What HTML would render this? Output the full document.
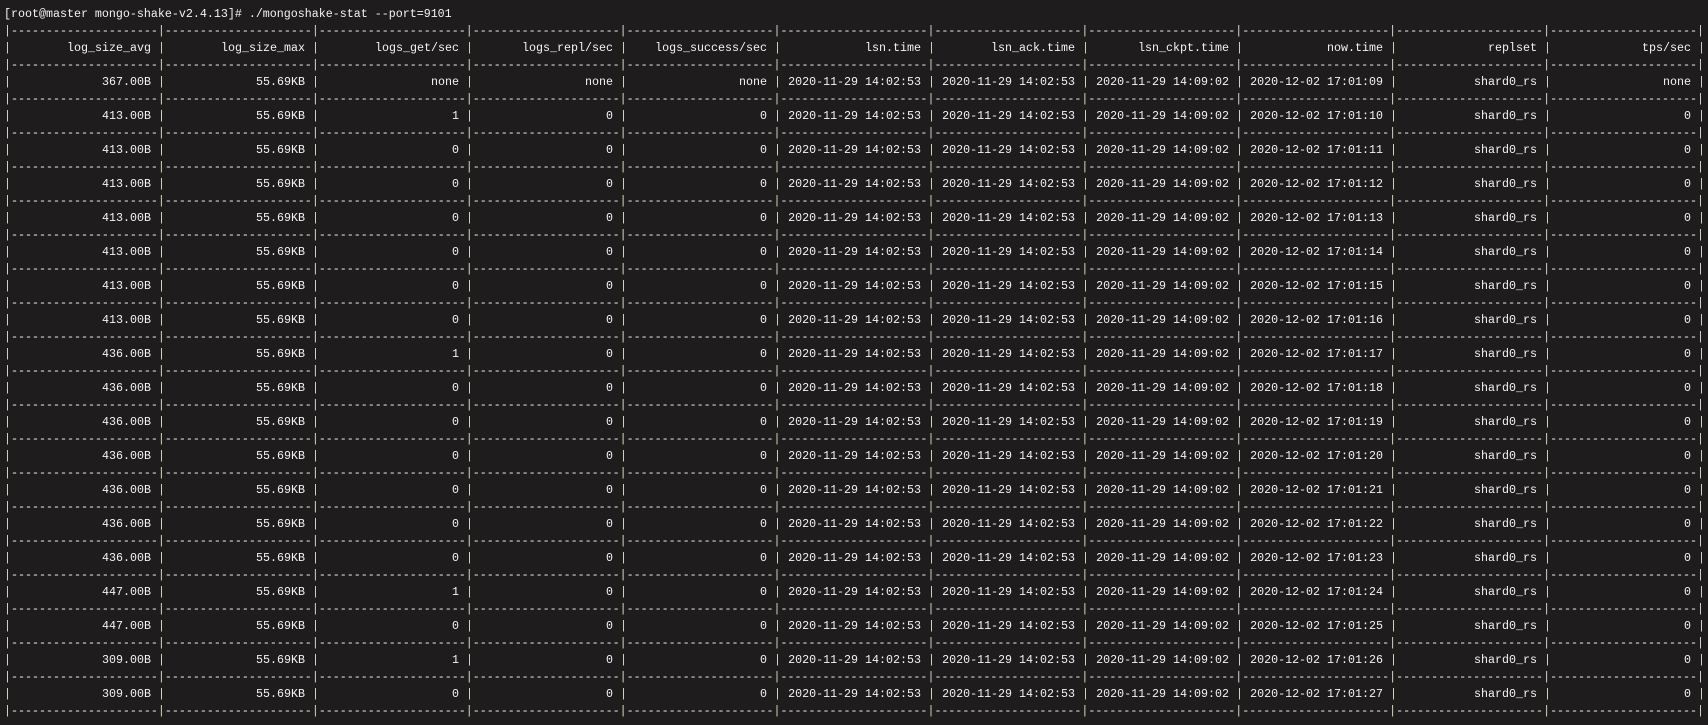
<!DOCTYPE html>
<html><head><meta charset="utf-8"><style>
html,body{margin:0;padding:0;background:#1e1c1c;width:1708px;height:725px;overflow:hidden}
#t{position:absolute;left:4px;top:6px;font-family:"Liberation Mono",monospace;font-size:11.67px;color:#f4f4f4}
.l{height:17px;line-height:17px;white-space:pre}
i{font-style:normal;color:#d6dcc4;display:inline-block;width:7px;text-align:center}
b{font-weight:normal;display:inline-block;width:147px;padding-right:7px;box-sizing:border-box;text-align:right}
</style></head><body><div id="t"><div class="l">[root@master mongo-shake-v2.4.13]# ./mongoshake-stat --port=9101</div><div class="l"><i>|</i>---------------------<i>|</i>---------------------<i>|</i>---------------------<i>|</i>---------------------<i>|</i>---------------------<i>|</i>---------------------<i>|</i>---------------------<i>|</i>---------------------<i>|</i>---------------------<i>|</i>---------------------<i>|</i>---------------------<i>|</i></div><div class="l"><i>|</i><b>log_size_avg</b><i>|</i><b>log_size_max</b><i>|</i><b>logs_get/sec</b><i>|</i><b>logs_repl/sec</b><i>|</i><b>logs_success/sec</b><i>|</i><b>lsn.time</b><i>|</i><b>lsn_ack.time</b><i>|</i><b>lsn_ckpt.time</b><i>|</i><b>now.time</b><i>|</i><b>replset</b><i>|</i><b>tps/sec</b><i>|</i></div><div class="l"><i>|</i>---------------------<i>|</i>---------------------<i>|</i>---------------------<i>|</i>---------------------<i>|</i>---------------------<i>|</i>---------------------<i>|</i>---------------------<i>|</i>---------------------<i>|</i>---------------------<i>|</i>---------------------<i>|</i>---------------------<i>|</i></div><div class="l"><i>|</i><b>367.00B</b><i>|</i><b>55.69KB</b><i>|</i><b>none</b><i>|</i><b>none</b><i>|</i><b>none</b><i>|</i><b>2020-11-29 14:02:53</b><i>|</i><b>2020-11-29 14:02:53</b><i>|</i><b>2020-11-29 14:09:02</b><i>|</i><b>2020-12-02 17:01:09</b><i>|</i><b>shard0_rs</b><i>|</i><b>none</b><i>|</i></div><div class="l"><i>|</i>---------------------<i>|</i>---------------------<i>|</i>---------------------<i>|</i>---------------------<i>|</i>---------------------<i>|</i>---------------------<i>|</i>---------------------<i>|</i>---------------------<i>|</i>---------------------<i>|</i>---------------------<i>|</i>---------------------<i>|</i></div><div class="l"><i>|</i><b>413.00B</b><i>|</i><b>55.69KB</b><i>|</i><b>1</b><i>|</i><b>0</b><i>|</i><b>0</b><i>|</i><b>2020-11-29 14:02:53</b><i>|</i><b>2020-11-29 14:02:53</b><i>|</i><b>2020-11-29 14:09:02</b><i>|</i><b>2020-12-02 17:01:10</b><i>|</i><b>shard0_rs</b><i>|</i><b>0</b><i>|</i></div><div class="l"><i>|</i>---------------------<i>|</i>---------------------<i>|</i>---------------------<i>|</i>---------------------<i>|</i>---------------------<i>|</i>---------------------<i>|</i>---------------------<i>|</i>---------------------<i>|</i>---------------------<i>|</i>---------------------<i>|</i>---------------------<i>|</i></div><div class="l"><i>|</i><b>413.00B</b><i>|</i><b>55.69KB</b><i>|</i><b>0</b><i>|</i><b>0</b><i>|</i><b>0</b><i>|</i><b>2020-11-29 14:02:53</b><i>|</i><b>2020-11-29 14:02:53</b><i>|</i><b>2020-11-29 14:09:02</b><i>|</i><b>2020-12-02 17:01:11</b><i>|</i><b>shard0_rs</b><i>|</i><b>0</b><i>|</i></div><div class="l"><i>|</i>---------------------<i>|</i>---------------------<i>|</i>---------------------<i>|</i>---------------------<i>|</i>---------------------<i>|</i>---------------------<i>|</i>---------------------<i>|</i>---------------------<i>|</i>---------------------<i>|</i>---------------------<i>|</i>---------------------<i>|</i></div><div class="l"><i>|</i><b>413.00B</b><i>|</i><b>55.69KB</b><i>|</i><b>0</b><i>|</i><b>0</b><i>|</i><b>0</b><i>|</i><b>2020-11-29 14:02:53</b><i>|</i><b>2020-11-29 14:02:53</b><i>|</i><b>2020-11-29 14:09:02</b><i>|</i><b>2020-12-02 17:01:12</b><i>|</i><b>shard0_rs</b><i>|</i><b>0</b><i>|</i></div><div class="l"><i>|</i>---------------------<i>|</i>---------------------<i>|</i>---------------------<i>|</i>---------------------<i>|</i>---------------------<i>|</i>---------------------<i>|</i>---------------------<i>|</i>---------------------<i>|</i>---------------------<i>|</i>---------------------<i>|</i>---------------------<i>|</i></div><div class="l"><i>|</i><b>413.00B</b><i>|</i><b>55.69KB</b><i>|</i><b>0</b><i>|</i><b>0</b><i>|</i><b>0</b><i>|</i><b>2020-11-29 14:02:53</b><i>|</i><b>2020-11-29 14:02:53</b><i>|</i><b>2020-11-29 14:09:02</b><i>|</i><b>2020-12-02 17:01:13</b><i>|</i><b>shard0_rs</b><i>|</i><b>0</b><i>|</i></div><div class="l"><i>|</i>---------------------<i>|</i>---------------------<i>|</i>---------------------<i>|</i>---------------------<i>|</i>---------------------<i>|</i>---------------------<i>|</i>---------------------<i>|</i>---------------------<i>|</i>---------------------<i>|</i>---------------------<i>|</i>---------------------<i>|</i></div><div class="l"><i>|</i><b>413.00B</b><i>|</i><b>55.69KB</b><i>|</i><b>0</b><i>|</i><b>0</b><i>|</i><b>0</b><i>|</i><b>2020-11-29 14:02:53</b><i>|</i><b>2020-11-29 14:02:53</b><i>|</i><b>2020-11-29 14:09:02</b><i>|</i><b>2020-12-02 17:01:14</b><i>|</i><b>shard0_rs</b><i>|</i><b>0</b><i>|</i></div><div class="l"><i>|</i>---------------------<i>|</i>---------------------<i>|</i>---------------------<i>|</i>---------------------<i>|</i>---------------------<i>|</i>---------------------<i>|</i>---------------------<i>|</i>---------------------<i>|</i>---------------------<i>|</i>---------------------<i>|</i>---------------------<i>|</i></div><div class="l"><i>|</i><b>413.00B</b><i>|</i><b>55.69KB</b><i>|</i><b>0</b><i>|</i><b>0</b><i>|</i><b>0</b><i>|</i><b>2020-11-29 14:02:53</b><i>|</i><b>2020-11-29 14:02:53</b><i>|</i><b>2020-11-29 14:09:02</b><i>|</i><b>2020-12-02 17:01:15</b><i>|</i><b>shard0_rs</b><i>|</i><b>0</b><i>|</i></div><div class="l"><i>|</i>---------------------<i>|</i>---------------------<i>|</i>---------------------<i>|</i>---------------------<i>|</i>---------------------<i>|</i>---------------------<i>|</i>---------------------<i>|</i>---------------------<i>|</i>---------------------<i>|</i>---------------------<i>|</i>---------------------<i>|</i></div><div class="l"><i>|</i><b>413.00B</b><i>|</i><b>55.69KB</b><i>|</i><b>0</b><i>|</i><b>0</b><i>|</i><b>0</b><i>|</i><b>2020-11-29 14:02:53</b><i>|</i><b>2020-11-29 14:02:53</b><i>|</i><b>2020-11-29 14:09:02</b><i>|</i><b>2020-12-02 17:01:16</b><i>|</i><b>shard0_rs</b><i>|</i><b>0</b><i>|</i></div><div class="l"><i>|</i>---------------------<i>|</i>---------------------<i>|</i>---------------------<i>|</i>---------------------<i>|</i>---------------------<i>|</i>---------------------<i>|</i>---------------------<i>|</i>---------------------<i>|</i>---------------------<i>|</i>---------------------<i>|</i>---------------------<i>|</i></div><div class="l"><i>|</i><b>436.00B</b><i>|</i><b>55.69KB</b><i>|</i><b>1</b><i>|</i><b>0</b><i>|</i><b>0</b><i>|</i><b>2020-11-29 14:02:53</b><i>|</i><b>2020-11-29 14:02:53</b><i>|</i><b>2020-11-29 14:09:02</b><i>|</i><b>2020-12-02 17:01:17</b><i>|</i><b>shard0_rs</b><i>|</i><b>0</b><i>|</i></div><div class="l"><i>|</i>---------------------<i>|</i>---------------------<i>|</i>---------------------<i>|</i>---------------------<i>|</i>---------------------<i>|</i>---------------------<i>|</i>---------------------<i>|</i>---------------------<i>|</i>---------------------<i>|</i>---------------------<i>|</i>---------------------<i>|</i></div><div class="l"><i>|</i><b>436.00B</b><i>|</i><b>55.69KB</b><i>|</i><b>0</b><i>|</i><b>0</b><i>|</i><b>0</b><i>|</i><b>2020-11-29 14:02:53</b><i>|</i><b>2020-11-29 14:02:53</b><i>|</i><b>2020-11-29 14:09:02</b><i>|</i><b>2020-12-02 17:01:18</b><i>|</i><b>shard0_rs</b><i>|</i><b>0</b><i>|</i></div><div class="l"><i>|</i>---------------------<i>|</i>---------------------<i>|</i>---------------------<i>|</i>---------------------<i>|</i>---------------------<i>|</i>---------------------<i>|</i>---------------------<i>|</i>---------------------<i>|</i>---------------------<i>|</i>---------------------<i>|</i>---------------------<i>|</i></div><div class="l"><i>|</i><b>436.00B</b><i>|</i><b>55.69KB</b><i>|</i><b>0</b><i>|</i><b>0</b><i>|</i><b>0</b><i>|</i><b>2020-11-29 14:02:53</b><i>|</i><b>2020-11-29 14:02:53</b><i>|</i><b>2020-11-29 14:09:02</b><i>|</i><b>2020-12-02 17:01:19</b><i>|</i><b>shard0_rs</b><i>|</i><b>0</b><i>|</i></div><div class="l"><i>|</i>---------------------<i>|</i>---------------------<i>|</i>---------------------<i>|</i>---------------------<i>|</i>---------------------<i>|</i>---------------------<i>|</i>---------------------<i>|</i>---------------------<i>|</i>---------------------<i>|</i>---------------------<i>|</i>---------------------<i>|</i></div><div class="l"><i>|</i><b>436.00B</b><i>|</i><b>55.69KB</b><i>|</i><b>0</b><i>|</i><b>0</b><i>|</i><b>0</b><i>|</i><b>2020-11-29 14:02:53</b><i>|</i><b>2020-11-29 14:02:53</b><i>|</i><b>2020-11-29 14:09:02</b><i>|</i><b>2020-12-02 17:01:20</b><i>|</i><b>shard0_rs</b><i>|</i><b>0</b><i>|</i></div><div class="l"><i>|</i>---------------------<i>|</i>---------------------<i>|</i>---------------------<i>|</i>---------------------<i>|</i>---------------------<i>|</i>---------------------<i>|</i>---------------------<i>|</i>---------------------<i>|</i>---------------------<i>|</i>---------------------<i>|</i>---------------------<i>|</i></div><div class="l"><i>|</i><b>436.00B</b><i>|</i><b>55.69KB</b><i>|</i><b>0</b><i>|</i><b>0</b><i>|</i><b>0</b><i>|</i><b>2020-11-29 14:02:53</b><i>|</i><b>2020-11-29 14:02:53</b><i>|</i><b>2020-11-29 14:09:02</b><i>|</i><b>2020-12-02 17:01:21</b><i>|</i><b>shard0_rs</b><i>|</i><b>0</b><i>|</i></div><div class="l"><i>|</i>---------------------<i>|</i>---------------------<i>|</i>---------------------<i>|</i>---------------------<i>|</i>---------------------<i>|</i>---------------------<i>|</i>---------------------<i>|</i>---------------------<i>|</i>---------------------<i>|</i>---------------------<i>|</i>---------------------<i>|</i></div><div class="l"><i>|</i><b>436.00B</b><i>|</i><b>55.69KB</b><i>|</i><b>0</b><i>|</i><b>0</b><i>|</i><b>0</b><i>|</i><b>2020-11-29 14:02:53</b><i>|</i><b>2020-11-29 14:02:53</b><i>|</i><b>2020-11-29 14:09:02</b><i>|</i><b>2020-12-02 17:01:22</b><i>|</i><b>shard0_rs</b><i>|</i><b>0</b><i>|</i></div><div class="l"><i>|</i>---------------------<i>|</i>---------------------<i>|</i>---------------------<i>|</i>---------------------<i>|</i>---------------------<i>|</i>---------------------<i>|</i>---------------------<i>|</i>---------------------<i>|</i>---------------------<i>|</i>---------------------<i>|</i>---------------------<i>|</i></div><div class="l"><i>|</i><b>436.00B</b><i>|</i><b>55.69KB</b><i>|</i><b>0</b><i>|</i><b>0</b><i>|</i><b>0</b><i>|</i><b>2020-11-29 14:02:53</b><i>|</i><b>2020-11-29 14:02:53</b><i>|</i><b>2020-11-29 14:09:02</b><i>|</i><b>2020-12-02 17:01:23</b><i>|</i><b>shard0_rs</b><i>|</i><b>0</b><i>|</i></div><div class="l"><i>|</i>---------------------<i>|</i>---------------------<i>|</i>---------------------<i>|</i>---------------------<i>|</i>---------------------<i>|</i>---------------------<i>|</i>---------------------<i>|</i>---------------------<i>|</i>---------------------<i>|</i>---------------------<i>|</i>---------------------<i>|</i></div><div class="l"><i>|</i><b>447.00B</b><i>|</i><b>55.69KB</b><i>|</i><b>1</b><i>|</i><b>0</b><i>|</i><b>0</b><i>|</i><b>2020-11-29 14:02:53</b><i>|</i><b>2020-11-29 14:02:53</b><i>|</i><b>2020-11-29 14:09:02</b><i>|</i><b>2020-12-02 17:01:24</b><i>|</i><b>shard0_rs</b><i>|</i><b>0</b><i>|</i></div><div class="l"><i>|</i>---------------------<i>|</i>---------------------<i>|</i>---------------------<i>|</i>---------------------<i>|</i>---------------------<i>|</i>---------------------<i>|</i>---------------------<i>|</i>---------------------<i>|</i>---------------------<i>|</i>---------------------<i>|</i>---------------------<i>|</i></div><div class="l"><i>|</i><b>447.00B</b><i>|</i><b>55.69KB</b><i>|</i><b>0</b><i>|</i><b>0</b><i>|</i><b>0</b><i>|</i><b>2020-11-29 14:02:53</b><i>|</i><b>2020-11-29 14:02:53</b><i>|</i><b>2020-11-29 14:09:02</b><i>|</i><b>2020-12-02 17:01:25</b><i>|</i><b>shard0_rs</b><i>|</i><b>0</b><i>|</i></div><div class="l"><i>|</i>---------------------<i>|</i>---------------------<i>|</i>---------------------<i>|</i>---------------------<i>|</i>---------------------<i>|</i>---------------------<i>|</i>---------------------<i>|</i>---------------------<i>|</i>---------------------<i>|</i>---------------------<i>|</i>---------------------<i>|</i></div><div class="l"><i>|</i><b>309.00B</b><i>|</i><b>55.69KB</b><i>|</i><b>1</b><i>|</i><b>0</b><i>|</i><b>0</b><i>|</i><b>2020-11-29 14:02:53</b><i>|</i><b>2020-11-29 14:02:53</b><i>|</i><b>2020-11-29 14:09:02</b><i>|</i><b>2020-12-02 17:01:26</b><i>|</i><b>shard0_rs</b><i>|</i><b>0</b><i>|</i></div><div class="l"><i>|</i>---------------------<i>|</i>---------------------<i>|</i>---------------------<i>|</i>---------------------<i>|</i>---------------------<i>|</i>---------------------<i>|</i>---------------------<i>|</i>---------------------<i>|</i>---------------------<i>|</i>---------------------<i>|</i>---------------------<i>|</i></div><div class="l"><i>|</i><b>309.00B</b><i>|</i><b>55.69KB</b><i>|</i><b>0</b><i>|</i><b>0</b><i>|</i><b>0</b><i>|</i><b>2020-11-29 14:02:53</b><i>|</i><b>2020-11-29 14:02:53</b><i>|</i><b>2020-11-29 14:09:02</b><i>|</i><b>2020-12-02 17:01:27</b><i>|</i><b>shard0_rs</b><i>|</i><b>0</b><i>|</i></div><div class="l"><i>|</i>---------------------<i>|</i>---------------------<i>|</i>---------------------<i>|</i>---------------------<i>|</i>---------------------<i>|</i>---------------------<i>|</i>---------------------<i>|</i>---------------------<i>|</i>---------------------<i>|</i>---------------------<i>|</i>---------------------<i>|</i></div></div></body></html>
